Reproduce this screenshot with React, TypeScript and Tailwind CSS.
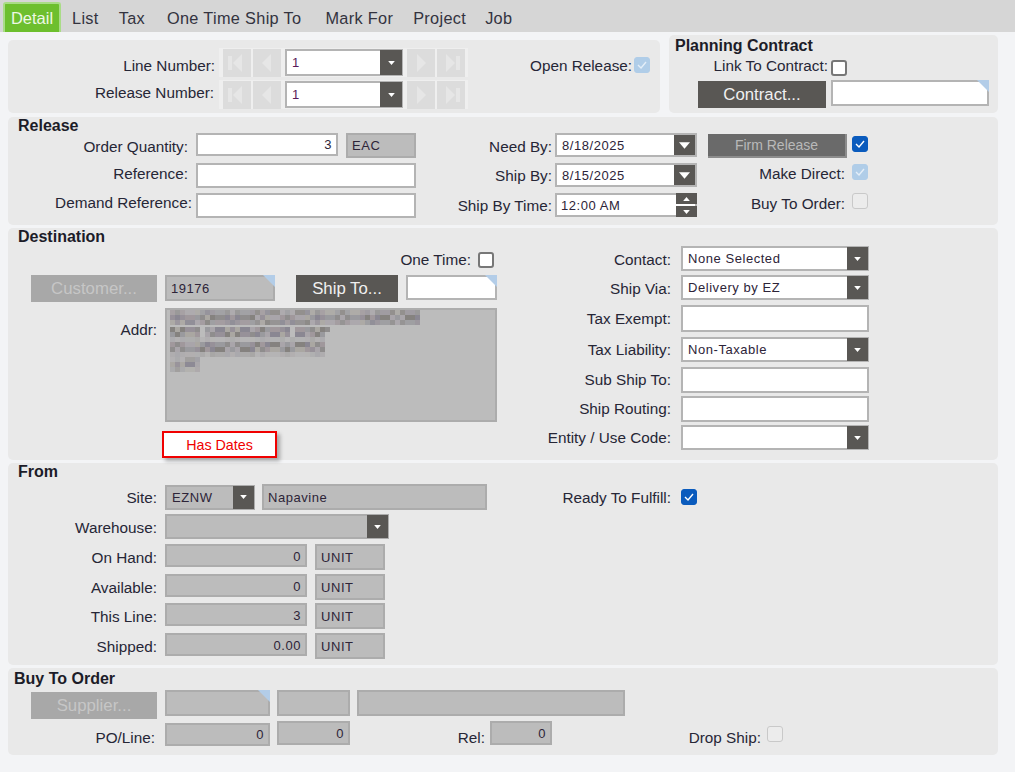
import React from "react";

const text = "text-[15.3px] text-[#262636] leading-none whitespace-nowrap";
const val = "text-[13px] tracking-[0.55px] text-[#2d2438] leading-none whitespace-nowrap";

function Label({ w, children, className = "" }: { w: number; children: React.ReactNode; className?: string }) {
  return (
    <div style={{ width: w }} className={`shrink-0 text-right ${text} ${className}`}>
      {children}
    </div>
  );
}

function Caret({ big = false }: { big?: boolean }) {
  return (
    <svg width={big ? 11 : 7} height={big ? 7 : 4} viewBox="0 0 10 6" className="block">
      <path d="M0 0h10L5 6z" fill="#fff" />
    </svg>
  );
}

function Box({
  w,
  h = 25,
  disabled = false,
  right = false,
  corner = false,
  children,
  className = "",
}: {
  w: number;
  h?: number;
  disabled?: boolean;
  right?: boolean;
  corner?: boolean;
  children?: React.ReactNode;
  className?: string;
}) {
  return (
    <div
      style={{ width: w, height: h }}
      className={`relative shrink-0 flex items-center border-2 ${
        disabled ? "bg-[#bcbcbc] border-[#acacac]" : "bg-white border-[#b4b4b4]"
      } ${right ? "justify-end pr-1" : "pl-[4px]"} ${val} ${className}`}
    >
      {children}
      {corner && (
        <svg width="12" height="12" viewBox="0 0 12 12" className="absolute -top-[2px] -right-[2px]">
          <path d="M0 0h12v12z" fill="#b3cde8" />
        </svg>
      )}
    </div>
  );
}

function Combo({
  w,
  h = 25,
  disabled = false,
  big = false,
  arrow = 21,
  children,
  className = "",
}: {
  w: number;
  h?: number;
  disabled?: boolean;
  big?: boolean;
  arrow?: number;
  children?: React.ReactNode;
  className?: string;
}) {
  return (
    <div
      style={{ width: w, height: h }}
      className={`relative shrink-0 flex items-center border-2 ${
        disabled ? "bg-[#bcbcbc] border-[#acacac]" : "bg-white border-[#b4b4b4]"
      } pl-[5px] ${val} ${className}`}
    >
      <span className="flex-1 min-w-0">{children}</span>
      <span
        style={{ width: arrow }}
        className={`absolute flex items-center justify-center bg-[#595754] ${
          big ? "right-0 top-0 bottom-0" : "-right-[1px] -top-[1px] -bottom-[1px]"
        }`}
      >
        <Caret big={big} />
      </span>
    </div>
  );
}

function Check({ state }: { state: "on" | "muted" | "off" | "faint" }) {
  const cls = {
    on: "bg-[#0a5bbd] border-[#0a5bbd]",
    muted: "bg-[#b0cde8] border-[#b0cde8]",
    off: "bg-white border-[#777] border-2",
    faint: "bg-[#ececec] border-[#c9c9c9]",
  }[state];
  return (
    <span className={`w-[16px] h-[16px] shrink-0 rounded-[3px] border flex items-center justify-center ${cls}`}>
      {(state === "on" || state === "muted") && (
        <svg width="10" height="8" viewBox="0 0 10 8" fill="none">
          <path d="M1 4l3 3 5-6" stroke={state === "on" ? "#fff" : "#e4eef8"} strokeWidth="1.4" />
        </svg>
      )}
    </span>
  );
}

function DarkBtn({
  w,
  h = 27,
  tone = "dark",
  children,
}: {
  w: number;
  h?: number;
  tone?: "dark" | "gray";
  children: React.ReactNode;
}) {
  return (
    <div
      style={{ width: w, height: h }}
      className={`shrink-0 flex items-center justify-center pt-[2px] text-[16.8px] leading-none whitespace-nowrap ${
        tone === "dark" ? "bg-[#595754] text-[#f0f0f0]" : "bg-[#a8a8a8] text-[#c6c6c6]"
      }`}
    >
      {children}
    </div>
  );
}

function NavIcon({ kind }: { kind: "first" | "prev" | "next" | "last" }) {
  const d = {
    first: "M5 7h4v14H5zM19 5v18l-9-9z",
    prev: "M18 5v18l-9-9z",
    next: "M10 5v18l9-9z",
    last: "M23 7h-4v14h4zM9 5v18l9-9z",
  }[kind];
  return (
    <span className="w-[28px] h-[28px] bg-[#dcdcdc] shrink-0">
      <svg width="28" height="28" viewBox="0 0 28 28">
        <path d={d} fill="#e6e6e6" />
      </svg>
    </span>
  );
}

function NavRow() {
  return (
    <div className="w-[249px] h-[29px] bg-[#efefef] flex items-center pl-[4px] gap-[2px]">
      <NavIcon kind="first" />
      <NavIcon kind="prev" />
      <Combo w={118} h={27} arrow={22} className="mx-[2px] text-[#5a1a5a]">
        1
      </Combo>
      <NavIcon kind="next" />
      <NavIcon kind="last" />
    </div>
  );
}

/* The address is pixelated in the picture: y is the band's top, o its strength. */
const bands: { y: number; o: number; spans: number[]; seed: number }[] = [
  { y: 310, o: 0.75, spans: [170, 420], seed: 3 },
  { y: 315, o: 1, spans: [170, 420], seed: 9 },
  { y: 320, o: 0.85, spans: [170, 420], seed: 4 },
  { y: 327, o: 1, spans: [170, 200, 205, 290, 295, 330], seed: 7 },
  { y: 332, o: 1, spans: [170, 200, 205, 290, 295, 325], seed: 2 },
  { y: 337, o: 0.3, spans: [170, 325], seed: 6 },
  { y: 342, o: 1, spans: [170, 325], seed: 11 },
  { y: 347, o: 1, spans: [170, 325], seed: 8 },
  { y: 352, o: 0.35, spans: [170, 325], seed: 1 },
  { y: 357, o: 0.5, spans: [170, 200], seed: 5 },
  { y: 362, o: 0.95, spans: [170, 200], seed: 12 },
  { y: 367, o: 0.5, spans: [170, 200], seed: 10 },
];

function Mosaic() {
  const tones = ["#a0989c", "#8f8d8d", "#a9a5aa", "#9a9a9e", "#85827f", "#aaa7a2", "#979199", "#8a8792"];
  const cells: React.ReactNode[] = [];
  bands.forEach((b, bi) => {
    for (let s = 0; s < b.spans.length; s += 2) {
      for (let x = b.spans[s]; x < b.spans[s + 1]; x += 5) {
        const i = (x * 7 + b.seed * 13 + ((x * x) % 11)) % tones.length;
        cells.push(
          <rect key={`${bi}-${x}`} x={x - 167} y={b.y - 310} width="5" height="5" fill={tones[i]} opacity={b.o} />
        );
      }
    }
  });
  return (
    <svg width="260" height="64" className="absolute left-0 top-0">
      {cells}
    </svg>
  );
}

function Section({ className = "", children }: { className?: string; children: React.ReactNode }) {
  return <section className={`bg-[#e9e9e9] rounded-[5px] ${className}`}>{children}</section>;
}

function Heading({ children, className = "" }: { children: React.ReactNode; className?: string }) {
  return <h2 className={`text-[16px] font-bold leading-none text-[#1c1c28] whitespace-nowrap ${className}`}>{children}</h2>;
}

const TABS: [string, string][] = [
  ["List", "ml-0"],
  ["Tax", "ml-[20px]"],
  ["One Time Ship To", "ml-[22px]"],
  ["Mark For", "ml-[24px]"],
  ["Project", "ml-[20px]"],
  ["Job", "ml-[19px]"],
];

export default function App() {
  return (
    <div className="w-[1015px] h-[772px] bg-[#f3f4f6] overflow-hidden font-['Liberation_Sans',Arial,sans-serif]">
      {/* Tabs */}
      <div className="h-[32px] bg-[#d6d6d6] flex items-end pl-[3px]">
        <div className="w-[58px] h-[30px] bg-[#6dbf2e] border-2 border-b-0 border-[#a9dc86] rounded-t-[3px] flex items-center justify-center text-[16.5px] text-[#eef8e6] leading-none">
          Detail
        </div>
        <div className="flex items-center h-[30px] pl-[11px] pt-[3px] text-[16.3px] tracking-[0.33px] text-[#33333f] leading-none whitespace-nowrap">
          {TABS.map(([t, m]) => (
            <span key={t} className={m}>{t}</span>
          ))}
        </div>
      </div>

      <div className="pl-[8px] w-[998px]">
        {/* Top row */}
        <div className="flex h-[78px] mt-[3px] gap-[9px] items-end">
          <Section className="w-[652px] h-[73px] pt-[8px] flex">
            <div className="flex flex-col w-[211px] pr-[4px]">
              <div className="h-[33px] flex items-center"><Label w={207} className="mt-[2px]">Line Number:</Label></div>
              <div className="h-[22px] flex items-center"><Label w={206} className="mt-[2px]">Release Number:</Label></div>
            </div>
            <div className="flex flex-col gap-[3px]">
              <NavRow />
              <NavRow />
            </div>
            <div className="ml-[62px] h-[33px] flex items-center gap-[3px]">
              <Label w={101} className="mt-[2px]">Open Release:</Label>
              <Check state="muted" />
            </div>
          </Section>
          <Section className="w-[329px] h-[78px] pl-[6px]">
            <Heading className="pt-[3px]">Planning Contract</Heading>
            <div className="flex items-center h-[20px] mt-[2px]">
              <Label w={153}>Link To Contract:</Label>
              <span className="ml-[3px] mt-[4px]"><Check state="off" /></span>
            </div>
            <div className="flex items-start mt-[4px] pl-[23px]">
              <div className="mt-[1px]"><DarkBtn w={128}>Contract...</DarkBtn></div>
              <Box w={158} h={26} corner className="ml-[5px]" />
            </div>
          </Section>
        </div>

        {/* Release */}
        <Section className="h-[108px] mt-[4px] relative">
          <Heading className="pl-[10px] pt-[1px] h-[16px]">Release</Heading>
          <div className="flex flex-col gap-[5px]">
            <div className="flex items-center h-[25px]">
              <Label w={180} className="mt-[2px]">Order Quantity:</Label>
              <Box w={142} h={23} right className="ml-[8px] mb-[2px]">3</Box>
              <Box w={70} disabled className="ml-[8px] border-[#aaa]">EAC</Box>
              <Label w={136} className="mt-[2px]">Need By:</Label>
              <Combo w={142} h={24} big arrow={21} className="ml-[3px] mb-[1px]">8/18/2025</Combo>
              <div style={{ width: 139, height: 24 }} className="ml-[11px] mt-[1px] shrink-0 bg-[#6a6a6a] border-r-2 border-b-2 border-[#8c8c8c] flex items-center justify-center text-[14px] text-[#b9b9b9] leading-none">
                Firm Release
              </div>
              <span className="ml-[5px] mb-[3px]"><Check state="on" /></span>
            </div>
            <div className="flex items-center h-[25px]">
              <Label w={180} className="mb-[4px]">Reference:</Label>
              <Box w={220} className="ml-[8px]" />
              <Label w={136}>Ship By:</Label>
              <Combo w={142} h={24} big arrow={21} className="ml-[3px] mb-[1px]">8/15/2025</Combo>
              <Label w={148} className="mb-[4px]">Make Direct:</Label>
              <span className="ml-[7px] mb-[8px]"><Check state="muted" /></span>
            </div>
            <div className="flex items-center h-[25px]">
              <Label w={184} className="mb-[6px]">Demand Reference:</Label>
              <Box w={220} className="ml-[4px]" />
              <Label w={136}>Ship By Time:</Label>
              <div className="ml-[3px] mb-[1px] relative">
                <Box w={142} h={24}>12:00 AM</Box>
                <div className="absolute right-0 top-0 bottom-0 w-[21px] flex flex-col gap-[2px]">
                  <span className="flex-1 bg-[#595754] flex items-center justify-center"><svg width="7" height="4" viewBox="0 0 10 6"><path d="M0 6h10L5 0z" fill="#fff" /></svg></span>
                  <span className="flex-1 bg-[#595754] flex items-center justify-center"><Caret /></span>
                </div>
              </div>
              <Label w={148} className="mb-[4px]">Buy To Order:</Label>
              <span className="ml-[7px] mb-[10px]"><Check state="faint" /></span>
            </div>
          </div>
        </Section>

        {/* Destination */}
        <Section className="h-[232px] mt-[3px] relative flex">
          <div className="w-[507px] shrink-0">
            <Heading className="pl-[10px] pt-[1px] h-[17px]">Destination</Heading>
            <div className="flex items-center h-[20px] mt-[5px]">
              <Label w={463}>One Time:</Label>
              <span className="ml-[7px]"><Check state="off" /></span>
            </div>
            <div className="flex items-start mt-[5px] pl-[23px]">
              <DarkBtn w={126} tone="gray">Customer...</DarkBtn>
              <Box w={110} h={26} disabled corner className="ml-[8px]">19176</Box>
              <div className="ml-[21px]"><DarkBtn w={102}>Ship To...</DarkBtn></div>
              <Box w={91} h={25} corner className="ml-[8px]" />
            </div>
            <div className="flex items-start mt-[6px]">
              <Label w={149} className="pt-[14px]">Addr:</Label>
              <div className="relative ml-[8px] w-[332px] h-[114px] bg-[#bcbcbc] border-2 border-[#acacac]">
                <Mosaic />
              </div>
            </div>
            <div className="ml-[154px] mt-[9px] pt-[2px] w-[115px] h-[27px] bg-white border-2 border-[#f00000] shadow-[3px_3px_4px_rgba(0,0,0,0.3)] flex items-center justify-center text-[14.3px] text-[#f00000] leading-none">
              Has Dates
            </div>
          </div>
          <div className="flex flex-col pt-[18px]">
            <div className="flex items-center h-[25px]"><Label w={156} className="mt-[2px]">Contact:</Label><Combo w={188} className="ml-[10px]">None Selected</Combo></div>
            <div className="flex items-center h-[25px] mt-[4px]"><Label w={156} className="mt-[2px]">Ship Via:</Label><Combo w={188} className="ml-[10px]">Delivery by EZ</Combo></div>
            <div className="flex items-center h-[27px] mt-[5px]"><Label w={156}>Tax Exempt:</Label><Box w={188} h={27} className="ml-[10px]" /></div>
            <div className="flex items-center h-[25px] mt-[5px]"><Label w={156}>Tax Liability:</Label><Combo w={188} className="ml-[10px]">Non-Taxable</Combo></div>
            <div className="flex items-center h-[26px] mt-[5px]"><Label w={156}>Sub Ship To:</Label><Box w={188} h={26} className="ml-[10px]" /></div>
            <div className="flex items-center h-[26px] mt-[3px]"><Label w={156}>Ship Routing:</Label><Box w={188} h={26} className="ml-[10px]" /></div>
            <div className="flex items-center h-[25px] mt-[3px]"><Label w={156}>Entity / Use Code:</Label><Combo w={188} className="ml-[10px]"></Combo></div>
          </div>
        </Section>

        {/* From */}
        <Section className="h-[202px] mt-[3px]">
          <Heading className="pl-[10px] pt-[1px] h-[19px]">From</Heading>
          <div className="flex flex-col">
            <div className="flex items-center h-[26px] mt-[2px]">
              <Label w={149} className="mt-[2px]">Site:</Label>
              <Combo w={90} disabled className="ml-[8px]">EZNW</Combo>
              <Box w={225} h={26} disabled className="ml-[7px]">Napavine</Box>
              <Label w={184} className="mt-[2px]">Ready To Fulfill:</Label>
              <span className="ml-[10px]"><Check state="on" /></span>
            </div>
            <div className="flex items-center h-[25px] mt-[4px]">
              <Label w={149} className="mt-[2px]">Warehouse:</Label>
              <Combo w={224} disabled className="ml-[8px]"></Combo>
            </div>
            {[
              ["On Hand:", "0"],
              ["Available:", "0"],
              ["This Line:", "3"],
              ["Shipped:", "0.00"],
            ].map(([l, v], i) => (
              <div key={l} className={`flex items-start h-[26px] ${i === 0 ? "mt-[5px]" : i === 2 ? "mt-[3px]" : "mt-[4px]"}`}>
                <Label w={149} className="pt-[6px]">{l}</Label>
                <Box w={142} h={23} disabled right className="ml-[8px] pt-[1px]">{v}</Box>
                <Box w={70} h={26} disabled className="ml-[8px] pt-[1px]">UNIT</Box>
              </div>
            ))}
          </div>
        </Section>

        {/* Buy To Order */}
        <Section className="h-[87px] mt-[3px]">
          <Heading className="pl-[6px] pt-[3px] h-[21px]">Buy To Order</Heading>
          <div className="flex items-start pl-[23px] mt-[1px]">
            <div className="mt-[2px]"><DarkBtn w={126} tone="gray">Supplier...</DarkBtn></div>
            <Box w={105} h={26} disabled corner className="ml-[8px]" />
            <Box w={73} h={26} disabled className="ml-[7px]" />
            <Box w={268} h={26} disabled className="ml-[7px]" />
          </div>
          <div className="flex items-start mt-[2px]">
            <Label w={147} className="pt-[9px]">PO/Line:</Label>
            <Box w={105} h={23} disabled right className="ml-[10px] mt-[2px]">0</Box>
            <Box w={73} h={24} disabled right className="ml-[7px]">0</Box>
            <Label w={135} className="pt-[9px]">Rel:</Label>
            <Box w={62} h={24} disabled right className="ml-[5px]">0</Box>
            <Label w={209} className="pt-[9px]">Drop Ship:</Label>
            <span className="ml-[6px] mt-[5px]"><Check state="faint" /></span>
          </div>
        </Section>
      </div>
    </div>
  );
}
